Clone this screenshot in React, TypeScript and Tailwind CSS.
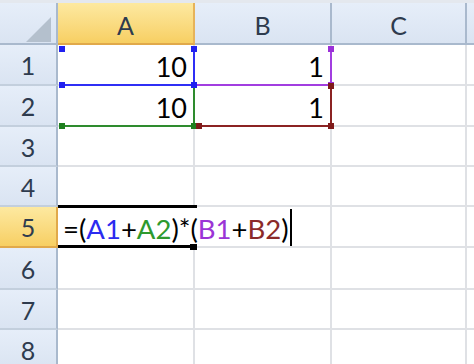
import React from "react";

const font = { fontFamily: "Lato, 'Open Sans', 'Liberation Sans', sans-serif" };

function RowHead({ n, selected, h }: { n: number; selected?: boolean; h: string }) {
  return (
    <div
      className={
        "w-[58px] shrink-0 flex items-center justify-center border-r-2 border-b-2 text-[25px] leading-none text-[#2e3b4e] " +
        h +
        (selected
          ? " bg-gradient-to-b from-[#fde9a0] to-[#f7cf62] border-r-[#e1a94a] border-b-[#e1a94a]"
          : " bg-gradient-to-b from-[#e6eef9] to-[#dae4f2] border-r-[#a9b9cd] border-b-[#c3cfdd]")
      }
    >
      <span className="pt-[2px]">{n}</span>
    </div>
  );
}

function Blank({ w, children }: { w: string; children?: React.ReactNode }) {
  return (
    <div className={"relative shrink-0 h-full border-b-2 border-b-[#dfe1e5] border-r-2 border-r-[#dfe1e5] " + w}>
      {children}
    </div>
  );
}

function Sq({ c, pos }: { c: string; pos: string }) {
  return <div className={"absolute w-[6px] h-[6px] z-10 " + c + " " + pos} />;
}

function Row({ n, h, selected }: { n: number; h: string; selected?: boolean }) {
  return (
    <div className={"flex shrink-0 " + h}>
      <RowHead n={n} h={h} selected={selected} />
      <Blank w="w-[137px]" />
      <Blank w="w-[137px]" />
      <Blank w="w-[135px]" />
      <div className="flex-1 border-b-2 border-[#dfe1e5]" />
    </div>
  );
}

export default function App() {
  return (
    <div className="w-[474px] h-[364px] overflow-hidden bg-white flex flex-col" style={font}>
      <div className="h-[3px] shrink-0 bg-[#e4e8ee]" />
      {/* header row */}
      <div className="flex h-[42px] shrink-0">
        <div className="w-[58px] shrink-0 relative border-r-2 border-b-2 border-[#a9b9cd] bg-gradient-to-b from-[#e6eef9] to-[#dae4f2]">
          <svg className="absolute left-[26px] top-[14px]" width="26" height="26" viewBox="0 0 26 26">
            <polygon points="25,0 25,25 0,25" fill="#b4c0cd" />
          </svg>
        </div>
        <div className="w-[137px] shrink-0 flex items-center justify-center border-r-2 border-b-2 border-r-[#e6b35a] border-b-[#e1a94a] bg-gradient-to-b from-[#fde9a0] to-[#f7cf62] text-[25px] leading-none text-[#2e3b4e]">
          <span className="pt-[4px]">A</span>
        </div>
        <div className="w-[137px] shrink-0 flex items-center justify-center border-r-2 border-b-2 border-[#a9b9cd] bg-gradient-to-b from-[#e6eef9] to-[#dae4f2] text-[25px] leading-none text-[#2e3b4e]">
          <span className="pt-[4px]">B</span>
        </div>
        <div className="w-[135px] shrink-0 flex items-center justify-center border-r-2 border-b-2 border-[#a9b9cd] bg-gradient-to-b from-[#e6eef9] to-[#dae4f2] text-[25px] leading-none text-[#2e3b4e]">
          <span className="pt-[4px]">C</span>
        </div>
        <div className="flex-1 border-b-2 border-[#a9b9cd] bg-gradient-to-b from-[#e6eef9] to-[#dae4f2]" />
      </div>

      {/* row 1 */}
      <div className="flex h-[41px] shrink-0">
        <RowHead n={1} h="h-[41px]" />
        <Blank w="w-[137px]">
          <div className="h-full flex items-center justify-end pr-[6px] pt-[4px] text-[27px] leading-none text-black">10</div>
          <div className="absolute -right-[2px] top-[2px] bottom-0 w-[2px] bg-[#2f2ff5]" />
          <div className="absolute left-[1px] -right-[2px] -bottom-[2px] h-[2px] bg-[#2f2ff5]" />
          <Sq c="bg-[#2020f0]" pos="left-[1px] top-[1px]" />
          <Sq c="bg-[#2020f0]" pos="-right-[4px] top-[1px]" />
          <Sq c="bg-[#2020f0]" pos="-right-[4px] -bottom-[4px]" />
          <Sq c="bg-[#2020f0]" pos="left-[1px] -bottom-[4px]" />
        </Blank>
        <Blank w="w-[137px]">
          <div className="h-full flex items-center justify-end pr-[6px] pt-[4px] text-[27px] leading-none text-black">1</div>
          <div className="absolute -right-[2px] top-[2px] bottom-0 w-[2px] bg-[#a23ee0]" />
          <div className="absolute left-[2px] -right-[2px] -bottom-[2px] h-[2px] bg-[#a23ee0]" />
          <Sq c="bg-[#9b30d8]" pos="-right-[4px] top-[1px]" />
          <Sq c="bg-[#9b30d8]" pos="-right-[4px] -bottom-[4px]" />
        </Blank>
        <Blank w="w-[135px]" />
        <div className="flex-1 border-b-2 border-[#dfe1e5]" />
      </div>

      {/* row 2 */}
      <div className="flex h-[41px] shrink-0">
        <RowHead n={2} h="h-[41px]" />
        <Blank w="w-[137px]">
          <div className="h-full flex items-center justify-end pr-[6px] pt-[4px] text-[27px] leading-none text-black">10</div>
          <div className="absolute -right-[2px] top-0 bottom-0 w-[2px] bg-[#2e8b2e]" />
          <div className="absolute left-[1px] -right-[2px] -bottom-[2px] h-[2px] bg-[#2e8b2e]" />
          <Sq c="bg-[#1f7f1f]" pos="left-[1px] -bottom-[4px]" />
          <Sq c="bg-[#1f7f1f]" pos="-right-[4px] -bottom-[4px]" />
        </Blank>
        <Blank w="w-[137px]">
          <div className="h-full flex items-center justify-end pr-[6px] pt-[4px] text-[27px] leading-none text-black">1</div>
          <div className="absolute -right-[2px] top-0 bottom-0 w-[2px] bg-[#8b2323]" />
          <div className="absolute left-[2px] -right-[2px] -bottom-[2px] h-[2px] bg-[#8b2323]" />
          <Sq c="bg-[#7f1a1a]" pos="left-[1px] -bottom-[4px]" />
          <Sq c="bg-[#7f1a1a]" pos="-right-[4px] -top-[3px]" />
          <Sq c="bg-[#7f1a1a]" pos="-right-[4px] -bottom-[4px]" />
        </Blank>
        <Blank w="w-[135px]" />
        <div className="flex-1 border-b-2 border-[#dfe1e5]" />
      </div>

      <Row n={3} h="h-[40px]" />
      <Row n={4} h="h-[40px]" />

      {/* row 5 */}
      <div className="flex h-[41px] shrink-0">
        <RowHead n={5} selected h="h-[41px]" />
        <div className="relative w-[274px] shrink-0 h-full border-b-2 border-b-[#dfe1e5] border-r-2 border-r-[#dfe1e5]">
          <div className="absolute left-0 -top-[2px] w-[139px] h-[3px] bg-black z-10" />
          <div className="absolute left-0 -bottom-[2px] w-[132px] h-[3px] bg-black z-10" />
          <div className="absolute left-[132px] -bottom-[4px] w-[7px] h-[6px] bg-black z-10" />
          <div className="h-full flex items-center pl-[5px] pt-[4px] text-[27.5px] leading-none text-black whitespace-nowrap">
            <span>=(</span>
            <span className="text-[#2b2bf0]">A1</span>
            <span>+</span>
            <span className="text-[#2e9a2e]">A2</span>
            <span>)*(</span>
            <span className="text-[#9b34d6]">B1</span>
            <span>+</span>
            <span className="text-[#8b2a2a]">B2</span>
            <span>)</span>
            <span className="inline-block w-[2px] h-[37px] bg-black ml-[1px] -mt-[2px]" />
          </div>
        </div>
        <Blank w="w-[135px]" />
        <div className="flex-1 border-b-2 border-[#dfe1e5]" />
      </div>

      <Row n={6} h="h-[42px]" />
      <Row n={7} h="h-[40px]" />
      <Row n={8} h="h-[40px]" />
    </div>
  );
}
